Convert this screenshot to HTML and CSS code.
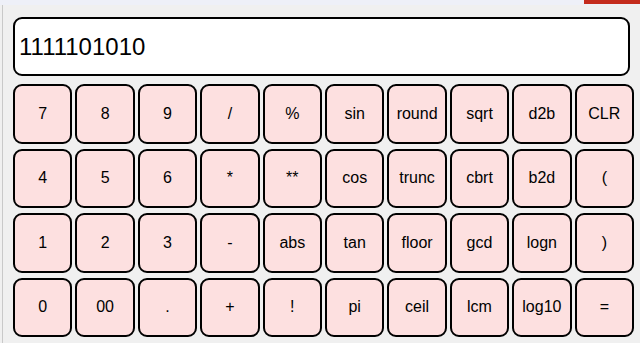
FILE: index.html
```html
<html>
<head>
<title>Calculadora</title>
<link rel="stylesheet" href="styles.css">
</head>
<body>
    <div class="barraSuperior">
        <div class="barraRoja"></div>
    </div>
    <div class="ventana">
        <div class="calculadora">
            <div class="pantalla" id="pantalla">1111101010</div>
            <div class="teclado">
                <button class="tecla">7</button>
                <button class="tecla">8</button>
                <button class="tecla">9</button>
                <button class="tecla">/</button>
                <button class="tecla">%</button>
                <button class="tecla">sin</button>
                <button class="tecla">round</button>
                <button class="tecla">sqrt</button>
                <button class="tecla">d2b</button>
                <button class="tecla">CLR</button>

                <button class="tecla">4</button>
                <button class="tecla">5</button>
                <button class="tecla">6</button>
                <button class="tecla">*</button>
                <button class="tecla">**</button>
                <button class="tecla">cos</button>
                <button class="tecla">trunc</button>
                <button class="tecla">cbrt</button>
                <button class="tecla">b2d</button>
                <button class="tecla">(</button>

                <button class="tecla">1</button>
                <button class="tecla">2</button>
                <button class="tecla">3</button>
                <button class="tecla">-</button>
                <button class="tecla">abs</button>
                <button class="tecla">tan</button>
                <button class="tecla">floor</button>
                <button class="tecla">gcd</button>
                <button class="tecla">logn</button>
                <button class="tecla">)</button>

                <button class="tecla">0</button>
                <button class="tecla">00</button>
                <button class="tecla">.</button>
                <button class="tecla">+</button>
                <button class="tecla">!</button>
                <button class="tecla">pi</button>
                <button class="tecla">ceil</button>
                <button class="tecla">lcm</button>
                <button class="tecla">log10</button>
                <button class="tecla">=</button>
            </div>
        </div>
    </div>
</body>
</html>
```

FILE: styles.css
```css
* {
    box-sizing: border-box;
    padding: 0px;
    margin: 0px;
}
body {
    background-color: #f0f0f0;
    font-family: "Liberation Sans", Arial, sans-serif;
    width: 640px;
    height: 343px;
    overflow: hidden;
}
.barraSuperior {
    height: 5px;
    background-color: #eef0f8;
    display: flex;
    justify-content: flex-end;
}
.barraRoja {
    width: 56px;
    height: 4px;
    background-color: #c42b1c;
}
.ventana {
    height: 338px;
    margin-left: 2px;
    border-left: 1px solid #c9c9c9;
}
.calculadora {
    padding-top: 12px;
    padding-left: 10px;
}
.pantalla {
    width: 617px;
    height: 59px;
    background-color: white;
    border: 2px solid black;
    border-radius: 9px;
    font-size: 24px;
    line-height: 55px;
    padding-left: 4px;
    color: black;
}
.teclado {
    margin-top: 8px;
    width: 621px;
    display: grid;
    grid-template-columns: repeat(10, 1fr);
    grid-template-rows: repeat(4, 59.5px);
    column-gap: 3px;
    row-gap: 5px;
}
.tecla {
    background-color: #fde0e0;
    border: 2px solid black;
    border-radius: 9px;
    font-family: "Liberation Sans", Arial, sans-serif;
    font-size: 16px;
    color: black;
    cursor: pointer;
}
.tecla:hover {
    background-color: #f8d0d0;
}
```
